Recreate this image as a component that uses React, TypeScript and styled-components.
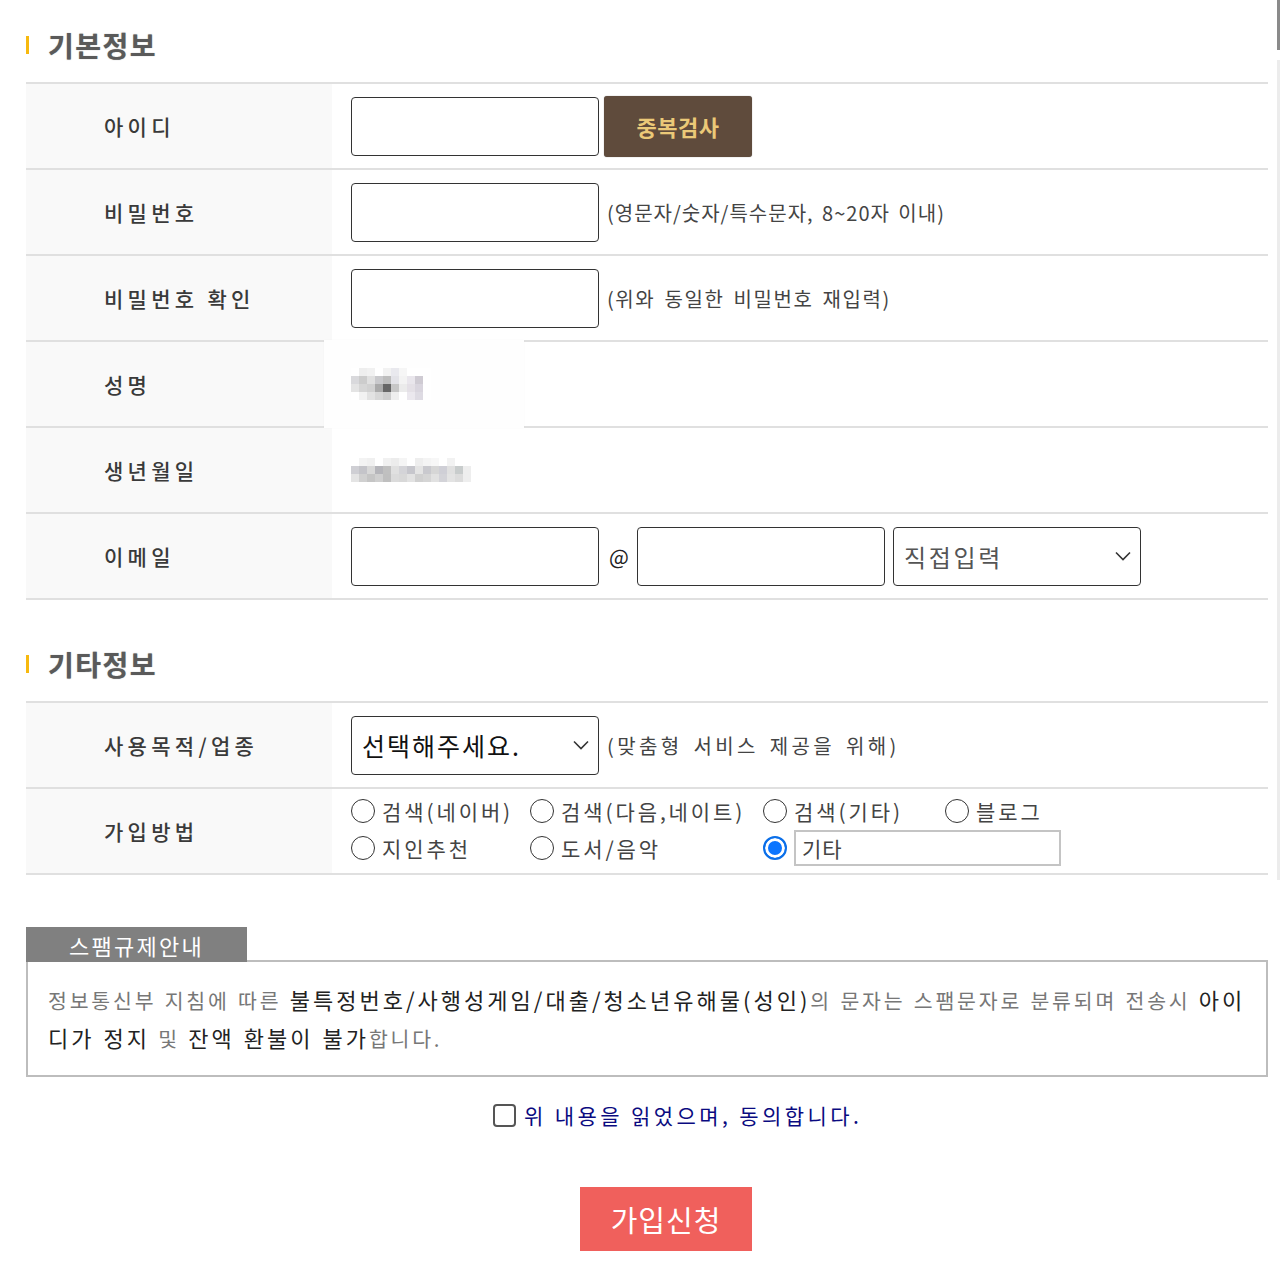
import React from "react";
import styled, { createGlobalStyle } from "styled-components";

const Global = createGlobalStyle`
  html, body { margin: 0; padding: 0; background: #fff; }
  body { font-family: "Noto Sans CJK KR", "Noto Sans", sans-serif; min-height: 1271px; }
  * { box-sizing: border-box; }
`;

const Page = styled.div`
  width: 1268px;
  padding-left: 26px;
  padding-bottom: 20px;
`;

const SectionHeader = styled.div<{ $top: number }>`
  display: flex;
  align-items: center;
  gap: 19px;
  padding-top: ${(p) => p.$top}px;
  height: ${(p) => p.$top + 38}px;
  margin-bottom: 18px;
`;

const YellowBar = styled.span`
  width: 3px;
  height: 18px;
  background: #f7b90f;
`;

const SectionTitle = styled.h2`
  margin: 0;
  font-size: 28px;
  line-height: 38px;
  font-weight: 700;
  color: #5a5a5a;
  letter-spacing: 1.5px;
  text-shadow: 0 0 1px rgba(90, 90, 90, 0.6);
`;

const Table = styled.div`
  border-top: 2px solid #e0e0e0;
`;

const Row = styled.div`
  display: grid;
  grid-template-columns: 306px 1fr;
  height: 86px;
  border-bottom: 2px solid #e0e0e0;
`;

const Label = styled.div`
  display: flex;
  align-items: center;
  padding-left: 78px;
  background: #f9f9f9;
  font-size: 21px;
  font-weight: 500;
  color: #3a3a3a;
  letter-spacing: 4.3px;
`;

const Cell = styled.div`
  position: relative;
  display: flex;
  align-items: center;
  padding-left: 19px;
`;

const TextBox = styled.input`
  width: 248px;
  height: 59px;
  border: 1px solid #333;
  border-radius: 4px;
  background: #fff;
  font-size: 20px;
  outline: none;
  padding: 0 8px;
`;

const CheckBtn = styled.button`
  margin-left: 5px;
  width: 148px;
  height: 61px;
  border: none;
  border-radius: 3px;
  background: #5f4b3c;
  color: #ebc978;
  font-family: "Noto Sans CJK KR", sans-serif;
  font-size: 22px;
  font-weight: 700;
  letter-spacing: 0.5px;
  box-shadow: 0 0 1px rgba(0, 0, 0, 0.5);
`;

const Hint = styled.span<{ $ls: number }>`
  margin-left: 8px;
  font-size: 20px;
  color: #444;
  letter-spacing: ${(p) => p.$ls}px;
  word-spacing: 3px;
  white-space: nowrap;
`;

const At = styled.span`
  margin: 0 8px 0 10px;
  font-size: 21px;
  color: #222;
`;

const SelectBox = styled.div<{ $dark?: boolean; $fs: number; $gap?: number; $ls: number }>`
  width: 248px;
  height: 59px;
  border: 1px solid #333;
  border-radius: 4px;
  display: flex;
  align-items: center;
  justify-content: space-between;
  padding: 0 9px 0 10px;
  font-size: ${(p) => p.$fs}px;
  letter-spacing: ${(p) => p.$ls}px;
  color: ${(p) => (p.$dark ? "#111" : "#555")};
  background: #fff;
  margin-left: ${(p) => p.$gap ?? 0}px;
`;

const Chevron = () => (
  <svg width="16" height="10" viewBox="0 0 16 10">
    <path d="M1 1.5 L8 8.5 L15 1.5" fill="none" stroke="#333" strokeWidth="1.6" />
  </svg>
);

const Patch = styled.div`
  position: absolute;
  left: -8px;
  top: -2px;
  width: 200px;
  height: 88px;
  background: #fefefe;
  box-shadow: 0 0 2px rgba(0, 0, 0, 0.03);
`;

const BlurWrap = styled.div`
  position: relative;
  display: flex;
  align-items: center;
`;

const Pix = ({ cols, rows, cells, size }: { cols: number; rows: number; cells: string[]; size: number }) => (
  <svg width={cols * size} height={rows * size} viewBox={`0 0 ${cols * size} ${rows * size}`}>
    <defs>
      <filter id={`b${cols}`}>
        <feGaussianBlur stdDeviation="0.6" />
      </filter>
    </defs>
    <g filter={`url(#b${cols})`}>
      {cells.map((c, i) => (
        <rect key={i} x={(i % cols) * size} y={Math.floor(i / cols) * size} width={size} height={size} fill={c} />
      ))}
    </g>
  </svg>
);

const nameCells = [
  "#fff", "#eee", "#f1f1f1", "#fff", "#f2f2f2", "#e9e9ee", "#f6f6f6", "#fff", "#fff", "#fff",
  "#d9d9dc", "#ccc", "#e0e0e0", "#c9c9cc", "#bdbdbd", "#e3e3e8", "#f3f3f3", "#e9e6ec", "#cfcbd3", "#fff",
  "#e4e4e4", "#d6d6d6", "#d1d1d1", "#aaa", "#666", "#c7c7c7", "#ebebeb", "#e4e0e6", "#d9d5de", "#fff",
  "#fff", "#f2f2f2", "#e2e2e2", "#d7d7d7", "#cdcdcd", "#efefef", "#fff", "#ebe8ee", "#dedbe3", "#fff",
];
const birthCells = [
  "#fff", "#f3f3f3", "#f0f0f0", "#fff", "#f1f1f1", "#ececec", "#f5f5f5", "#fff", "#eeeeee", "#f4f4f4", "#f7f7f7", "#fff", "#f2f2f2", "#fff", "#fff",
  "#cfcfd4", "#c4c4c9", "#d8d8d8", "#b5b5ba", "#c0c0c0", "#e0e0e0", "#d4d4d8", "#c6c6cc", "#e4e4e4", "#c9c9ce", "#d6d6d6", "#cfcfd6", "#e0e0e0", "#c8cccc", "#eee",
  "#e4e4e4", "#d0d0d0", "#c5c5c5", "#cfcfcf", "#bfbfbf", "#dbdbdb", "#d8d8d8", "#e2e2e2", "#d0d0d0", "#d5d5d5", "#e1e1e1", "#d3d3d8", "#e3e3e3", "#dcdcdc", "#eee",
];

const RadioGrid = styled.div`
  display: grid;
  grid-template-columns: 179px 233px 182px auto;
  grid-auto-rows: 37px;
  align-items: center;
  margin-top: -3px;
`;

const RadioItem = styled.label`
  display: flex;
  align-items: center;
  gap: 7px;
  font-size: 21px;
  color: #444;
  letter-spacing: 2.9px;
  white-space: nowrap;
`;

const RadioDot = styled.span<{ $on?: boolean }>`
  width: 24px;
  height: 24px;
  border-radius: 50%;
  border: ${(p) => (p.$on ? "2px solid #0b6fe8" : "1.6px solid #333")};
  background: ${(p) => (p.$on ? "#0b75ff" : "#fff")};
  box-shadow: ${(p) => (p.$on ? "inset 0 0 0 3px #fff" : "none")};
  flex: none;
`;

const EtcBox = styled.div`
  flex: none;
  width: 267px;
  height: 36px;
  border: 2px solid #c4c4c4;
  font-size: 21px;
  color: #444;
  padding-left: 6px;
  display: flex;
  align-items: center;
  letter-spacing: 1px;
`;

const SpamWrap = styled.div`
  margin-top: 52px;
`;

const SpamTab = styled.div`
  width: 221px;
  height: 35px;
  background: #808080;
  color: #fff;
  font-size: 22px;
  display: flex;
  align-items: center;
  justify-content: center;
  letter-spacing: 2.3px;
  position: relative;
  z-index: 1;
  margin-bottom: -2px;
`;

const SpamBox = styled.div`
  border: 2px solid #bdbdbd;
  padding: 19px 20px 18px 20px;
  font-size: 20.5px;
  line-height: 37px;
  color: #777;
  letter-spacing: 2.8px;
  word-spacing: 1px;
  white-space: nowrap;
`;

const Strong = styled.span`
  color: #222;
  font-size: 22px;
  letter-spacing: 3px;
`;

const AgreeRow = styled.div`
  display: flex;
  align-items: center;
  height: 40px;
  margin-top: 18px;
  padding-left: 467px;
  gap: 8px;
`;

const CheckSquare = styled.span`
  width: 23px;
  height: 23px;
  border: 2px solid #555;
  border-radius: 4px;
  background: #fff;
`;

const AgreeText = styled.span`
  font-size: 21px;
  color: #0a0a80;
  letter-spacing: 3.4px;
`;

const SubmitRow = styled.div`
  margin-top: 52px;
  padding-left: 554px;
`;

const Submit = styled.button`
  width: 172px;
  height: 64px;
  border: none;
  background: #f0605c;
  color: #fff;
  font-family: "Noto Sans CJK KR", sans-serif;
  font-size: 29px;
  letter-spacing: 1px;
`;

const ScrollThumb = styled.div`
  position: absolute;
  right: 0;
  top: 0;
  width: 3px;
  height: 50px;
  background: #8a8a8a;
`;

const ScrollTrack = styled.div`
  position: absolute;
  right: 0;
  top: 60px;
  width: 3px;
  height: 820px;
  background: #ececec;
`;

export default function App() {
  return (
    <>
      <Global />
      <ScrollThumb />
      <ScrollTrack />
      <Page>
        <SectionHeader $top={26}>
          <YellowBar />
          <SectionTitle>기본정보</SectionTitle>
        </SectionHeader>
        <Table>
          <Row>
            <Label>아이디</Label>
            <Cell>
              <TextBox />
              <CheckBtn>중복검사</CheckBtn>
            </Cell>
          </Row>
          <Row>
            <Label>비밀번호</Label>
            <Cell>
              <TextBox type="password" />
              <Hint $ls={1}>(영문자/숫자/특수문자, 8~20자 이내)</Hint>
            </Cell>
          </Row>
          <Row>
            <Label>비밀번호 확인</Label>
            <Cell>
              <TextBox type="password" />
              <Hint $ls={1.6}>(위와 동일한 비밀번호 재입력)</Hint>
            </Cell>
          </Row>
          <Row>
            <Label>성명</Label>
            <Cell>
              <Patch />
              <BlurWrap>
                <Pix cols={10} rows={4} size={8} cells={nameCells} />
              </BlurWrap>
            </Cell>
          </Row>
          <Row>
            <Label>생년월일</Label>
            <Cell>
              <BlurWrap>
                <Pix cols={15} rows={3} size={8} cells={birthCells} />
              </BlurWrap>
            </Cell>
          </Row>
          <Row>
            <Label>이메일</Label>
            <Cell>
              <TextBox />
              <At>@</At>
              <TextBox />
              <SelectBox $fs={24} $gap={8} $ls={2.7}>
                <span>직접입력</span>
                <Chevron />
              </SelectBox>
            </Cell>
          </Row>
        </Table>

        <SectionHeader $top={45}>
          <YellowBar />
          <SectionTitle>기타정보</SectionTitle>
        </SectionHeader>
        <Table>
          <Row>
            <Label>사용목적/업종</Label>
            <Cell>
              <SelectBox $fs={25} $dark $ls={2}>
                <span>선택해주세요.</span>
                <Chevron />
              </SelectBox>
              <Hint $ls={3.4}>(맞춤형 서비스 제공을 위해)</Hint>
            </Cell>
          </Row>
          <Row>
            <Label>가입방법</Label>
            <Cell>
              <RadioGrid>
                <RadioItem><RadioDot />검색(네이버)</RadioItem>
                <RadioItem><RadioDot />검색(다음,네이트)</RadioItem>
                <RadioItem><RadioDot />검색(기타)</RadioItem>
                <RadioItem><RadioDot />블로그</RadioItem>
                <RadioItem><RadioDot />지인추천</RadioItem>
                <RadioItem><RadioDot />도서/음악</RadioItem>
                <RadioItem><RadioDot $on /><EtcBox>기타</EtcBox></RadioItem>
              </RadioGrid>
            </Cell>
          </Row>
        </Table>

        <SpamWrap>
          <SpamTab>스팸규제안내</SpamTab>
          <SpamBox>
            정보통신부 지침에 따른 <Strong>불특정번호/사행성게임/대출/청소년유해물(성인)</Strong>의 문자는 스팸문자로 분류되며 전송시 <Strong>아이</Strong>
            <br />
            <Strong>디가 정지</Strong> 및 <Strong>잔액 환불이 불가</Strong>합니다.
          </SpamBox>
        </SpamWrap>

        <AgreeRow>
          <CheckSquare />
          <AgreeText>위 내용을 읽었으며, 동의합니다.</AgreeText>
        </AgreeRow>

        <SubmitRow>
          <Submit>가입신청</Submit>
        </SubmitRow>
      </Page>
    </>
  );
}
